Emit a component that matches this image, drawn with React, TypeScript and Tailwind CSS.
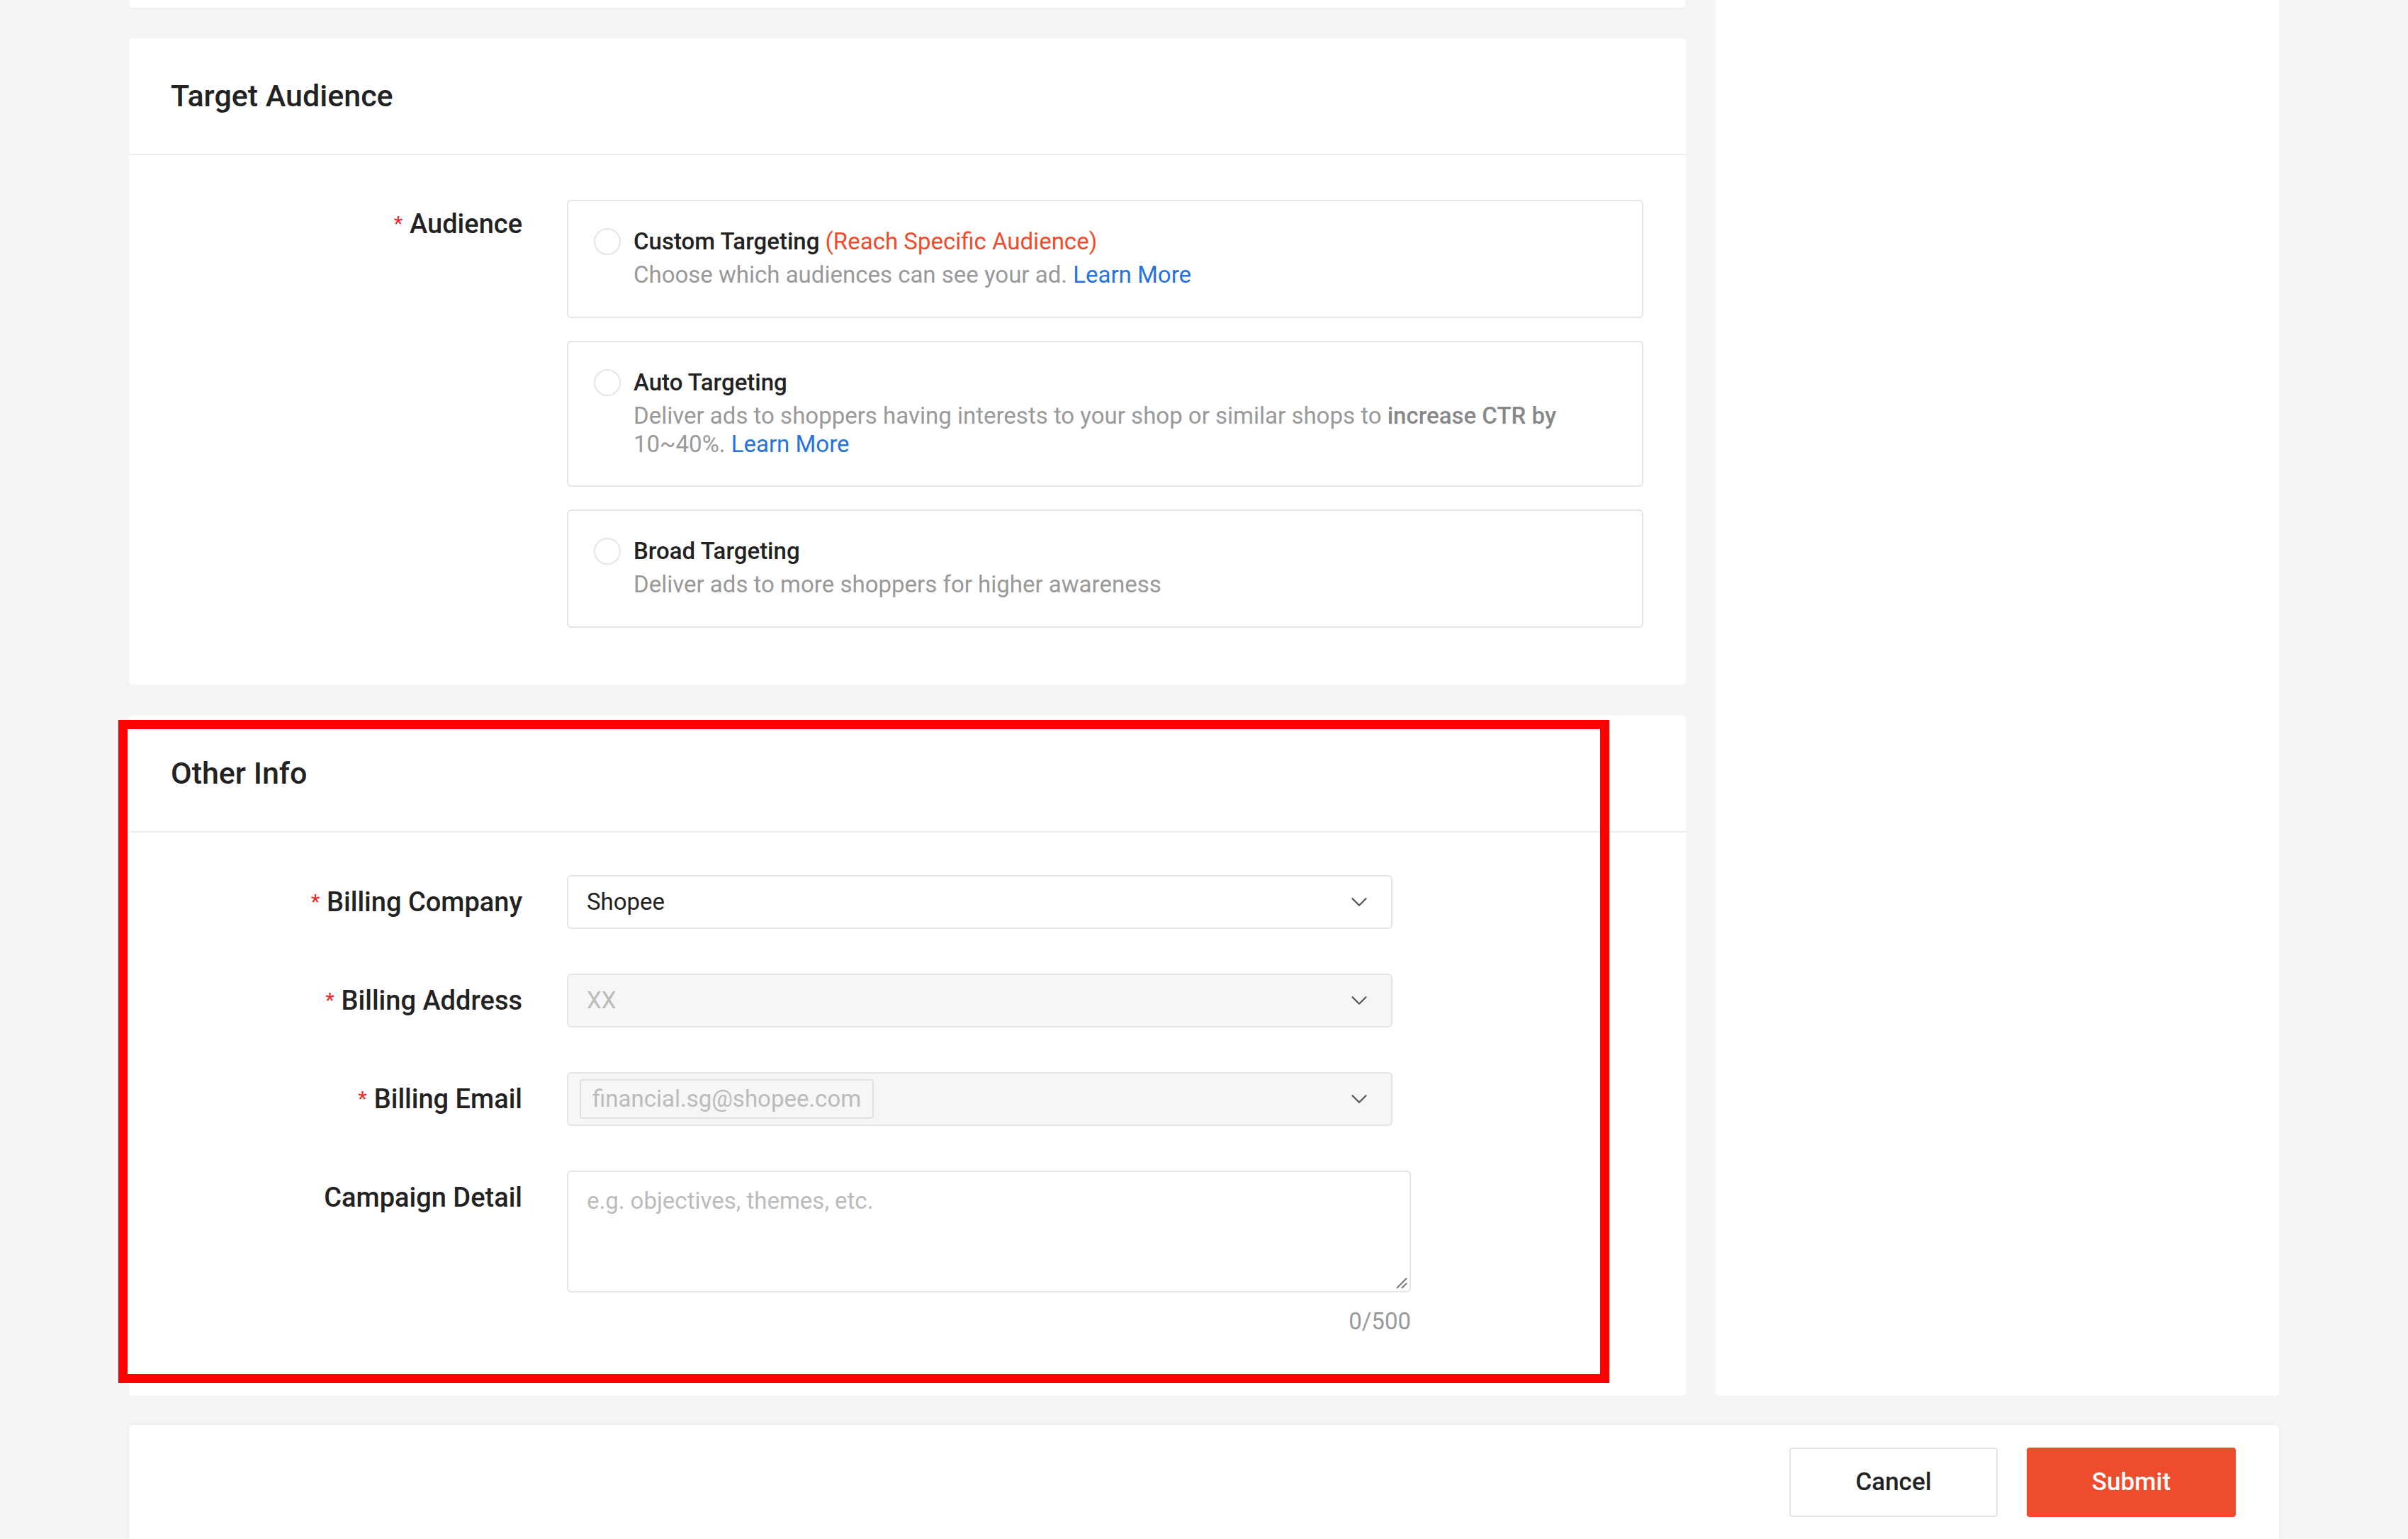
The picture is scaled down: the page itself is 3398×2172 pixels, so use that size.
import React from "react";

const Chevron = () => (
  <svg width="38" height="38" viewBox="0 0 24 24" fill="none" stroke="#555" strokeWidth="1.4" strokeLinecap="round" strokeLinejoin="round">
    <path d="M6 9l6 6 6-6" />
  </svg>
);

const Radio = () => <div className="w-[38px] h-[38px] rounded-full border-2 border-[#e5e5e5] bg-white shrink-0 mt-[2px]" />;

const Opt = ({ h, title, children }: { h: string; title: React.ReactNode; children: React.ReactNode }) => (
  <div className={`${h} border-2 border-[#e5e5e5] rounded-[6px] pl-[36px] pr-[40px] pt-[36px] flex gap-[18px]`}>
    <Radio />
    <div className="flex flex-col">
      <div className="text-[33px] leading-[42px] text-[#222] font-medium">{title}</div>
      <div className="text-[33px] leading-[40px] text-[#999] mt-[6px]">{children}</div>
    </div>
  </div>
);

const Label = ({ req, children }: { req?: boolean; children: React.ReactNode }) => (
  <div className="w-[555px] shrink-0 text-right text-[38px] leading-[76px] text-[#222] font-medium">
    {req && <span className="text-[#ee2c2c] text-[28px] mr-[10px] align-top">*</span>}
    {children}
  </div>
);

export default function App() {
  return (
    <div className="w-[3398px] h-[2172px] bg-[#f5f5f5] overflow-hidden relative" style={{ fontFamily: "Roboto, 'Liberation Sans', sans-serif" }}>
      <div className="flex pl-[182px] gap-[42px]">
        <div className="w-[2197px] flex flex-col">
          <div className="h-[11px] bg-white rounded-b-[6px] shadow-[0_2px_4px_rgba(0,0,0,0.04)]" />
          <div className="mt-[43px] h-[912px] bg-white rounded-[6px]">
            <div className="h-[165px] border-b-2 border-[#efefef] flex items-center pl-[59px] text-[43px] text-[#222] font-medium">Target Audience</div>
            <div className="flex pt-[63px]">
              <div className="w-[555px] shrink-0 text-right text-[38px] leading-[68px] text-[#222] font-medium">
                <span className="text-[#ee2c2c] text-[28px] mr-[10px] align-top">*</span>Audience
              </div>
              <div className="ml-[63px] w-[1519px] flex flex-col gap-[32px]">
                <Opt h="h-[167px]" title={<>Custom Targeting <span className="text-[#ee4d2d] font-normal">(Reach Specific Audience)</span></>}>
                  Choose which audiences can see your ad. <span className="text-[#2673dd]">Learn More</span>
                </Opt>
                <Opt h="h-[206px]" title="Auto Targeting">
                  Deliver ads to shoppers having interests to your shop or similar shops to <span className="font-medium text-[#888]">increase CTR by</span> 10~40%. <span className="text-[#2673dd]">Learn More</span>
                </Opt>
                <Opt h="h-[167px]" title="Broad Targeting">
                  Deliver ads to more shoppers for higher awareness
                </Opt>
              </div>
            </div>
          </div>
          <div className="mt-[44px] h-[960px] bg-white rounded-[6px] relative">
            <div className="h-[165px] border-b-2 border-[#efefef] flex items-center pl-[59px] text-[43px] text-[#222] font-medium">Other Info</div>
            <div className="flex flex-col pt-[60px] gap-[63px]">
              <div className="flex">
                <Label req>Billing Company</Label>
                <div className="ml-[63px] w-[1165px] h-[76px] border-2 border-[#e5e5e5] rounded-[6px] flex items-center justify-between px-[26px] text-[33px] text-[#222]">
                  Shopee<Chevron />
                </div>
              </div>
              <div className="flex">
                <Label req>Billing Address</Label>
                <div className="ml-[63px] w-[1165px] h-[76px] border-2 border-[#e5e5e5] bg-[#f6f6f6] rounded-[6px] flex items-center justify-between px-[26px] text-[33px] text-[#bbb]">
                  XX<Chevron />
                </div>
              </div>
              <div className="flex">
                <Label req>Billing Email</Label>
                <div className="ml-[63px] w-[1165px] h-[76px] border-2 border-[#e5e5e5] bg-[#f6f6f6] rounded-[6px] flex items-center justify-between pl-[16px] pr-[26px] text-[33px] text-[#bbb]">
                  <span className="border-2 border-[#e2e2e2] rounded-[4px] px-[16px] h-[56px] leading-[52px] bg-[#f6f6f6]">financial.sg@shopee.com</span>
                  <Chevron />
                </div>
              </div>
              <div className="flex">
                <Label>Campaign Detail</Label>
                <div className="ml-[63px] w-[1191px] flex flex-col">
                  <div className="h-[172px] border-2 border-[#e5e5e5] rounded-[6px] px-[26px] pt-[16px] text-[33px] text-[#bbb] relative">
                    e.g. objectives, themes, etc.
                    <svg className="absolute right-[2px] bottom-[2px]" width="22" height="22" viewBox="0 0 22 22" stroke="#777" strokeWidth="2"><path d="M20 6L6 20M20 13l-7 7" /></svg>
                  </div>
                  <div className="text-right text-[33px] text-[#999] mt-[16px]">0/500</div>
                </div>
              </div>
            </div>
            <div className="absolute left-[-15px] top-[6px] w-[2104px] h-[936px] border-[13px] border-[#ff0000] pointer-events-none" />
          </div>
        </div>
        <div className="w-[795px] h-[1970px] bg-white rounded-b-[6px]" />
      </div>
      <div className="ml-[182px] mt-[41px] w-[3034px] h-[200px] bg-white rounded-t-[6px] shadow-[0_-2px_8px_rgba(0,0,0,0.04)] flex justify-end items-start pt-[32px] pr-[61px] gap-[41px]">
        <button className="w-[294px] h-[98px] border-2 border-[#e5e5e5] rounded-[4px] bg-white text-[35px] text-[#222] font-medium">Cancel</button>
        <button className="w-[295px] h-[98px] rounded-[4px] bg-[#ee4d2d] text-[35px] text-white font-medium">Submit</button>
      </div>
    </div>
  );
}
